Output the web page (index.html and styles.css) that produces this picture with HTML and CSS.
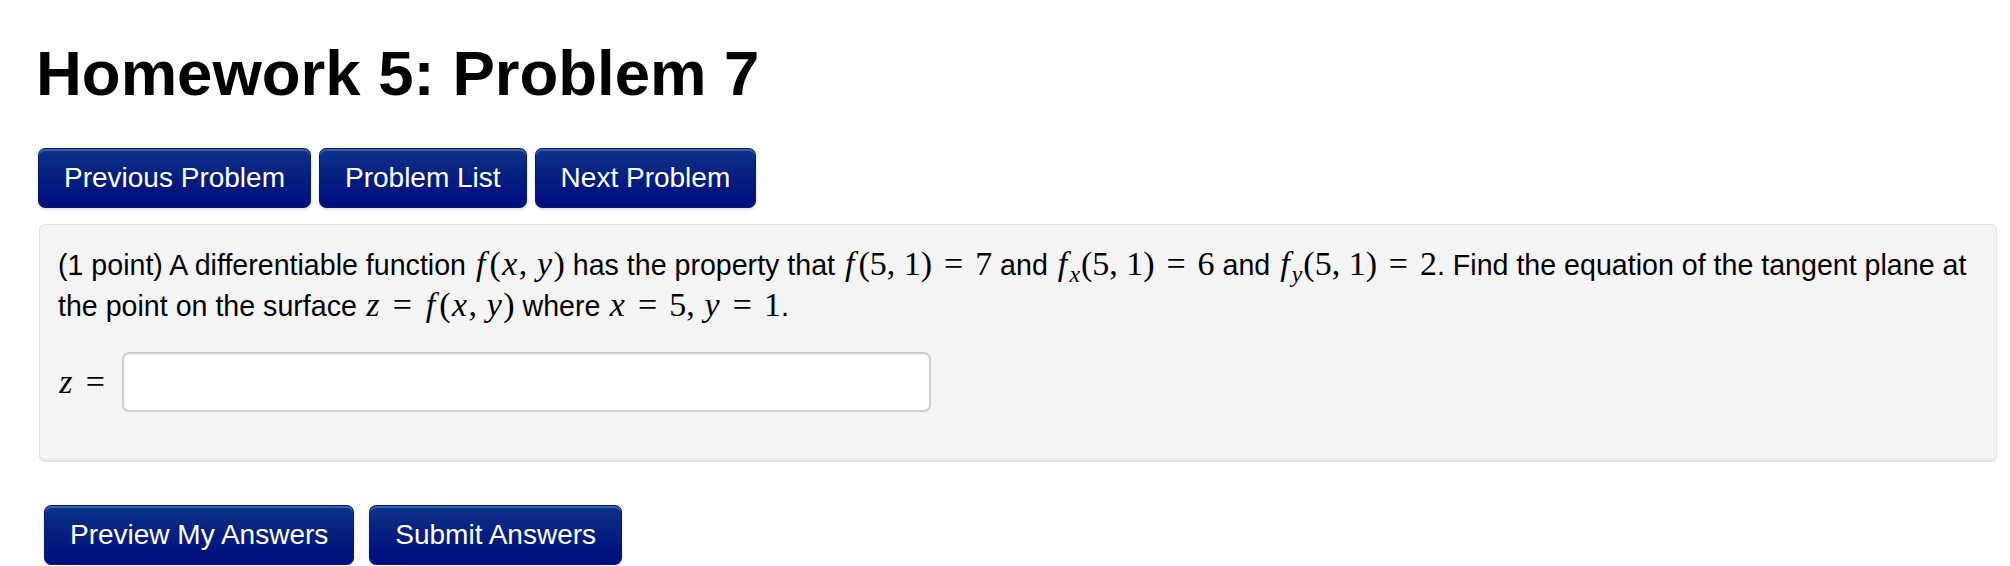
FILE: index.html
```html
<!DOCTYPE html>
<html lang="en">
<head>
<meta charset="utf-8">
<title>Homework 5: Problem 7</title>
<link rel="stylesheet" href="styles.css">
</head>
<body>
<div class="page">
  <h1 class="title">Homework 5: Problem 7</h1>
  <div class="nav">
    <button class="btn">Previous Problem</button>
    <button class="btn">Problem List</button>
    <button class="btn">Next Problem</button>
  </div>
  <div class="problem">
    <p class="statement">(1 point) A differentiable function <span class="m"><i class="mi f">f</i>(<i class="mi">x</i>,<span class="ts"></span><i class="mi">y</i>)</span> has the property that <span class="m"><i class="mi f">f</i>(5,<span class="ts"></span>1)<span class="eq">=</span>7</span> and <span class="m"><i class="mi f">f</i><sub class="sb"><i class="mi">x</i></sub>(5,<span class="ts"></span>1)<span class="eq">=</span>6</span> and <span class="m"><i class="mi f">f</i><sub class="sb"><i class="mi">y</i></sub>(5,<span class="ts"></span>1)<span class="eq">=</span>2</span>. Find the equation of the tangent plane at<br>the point on the surface <span class="m"><i class="mi">z</i><span class="eq">=</span><i class="mi f">f</i>(<i class="mi">x</i>,<span class="ts"></span><i class="mi">y</i>)</span> where <span class="m"><i class="mi">x</i><span class="eq">=</span>5,<span class="ts"></span><i class="mi">y</i><span class="eq">=</span>1</span>.</p>
    <div class="answer">
      <span class="m"><i class="mi">z</i><span class="eq">=</span></span>
      <input class="field" type="text" aria-label="answer">
    </div>
  </div>
  <div class="actions">
    <button class="btn">Preview My Answers</button>
    <button class="btn">Submit Answers</button>
  </div>
</div>
</body>
</html>
```

FILE: styles.css
```css
* { box-sizing: border-box; }

body {
  margin: 0;
  background: #fff;
  color: #000;
  font-family: "Liberation Sans", Arial, Helvetica, sans-serif;
  font-size: 28px;
  line-height: 40px;
}

.page {
  padding: 0 13px 0 38px;
}

.title {
  margin: 36px 0 0 -2px;
  font-size: 63.5px;
  line-height: 74px;
  font-weight: 700;
}

.nav {
  display: flex;
  gap: 8px;
  margin-top: 38px;
}

.btn {
  font-family: "Liberation Sans", Arial, Helvetica, sans-serif;
  font-size: 28px;
  line-height: 40px;
  color: #fff;
  padding: 9px 25px;
  border: 1px solid #021a6e;
  border-radius: 7px;
  background: linear-gradient(to bottom, #0c338c 0%, #05207f 45%, #000b80 100%);
  box-shadow: inset 0 2px 0 rgba(255, 255, 255, 0.22), 0 2px 3px rgba(0, 0, 0, 0.12);
  cursor: pointer;
}

.problem {
  margin: 16px 0 0 1px;
  background: #f4f4f4;
  border: 1px solid #e3e3e3;
  border-bottom-color: #dcdcdc;
  border-radius: 6px;
  box-shadow: inset 0 -2px 1px rgba(0, 0, 0, 0.05);
  padding: 19px 18px 49px 18px;
}

.statement {
  margin: 0;
  font-size: 28.6px;
}

.m {
  font-family: "Liberation Serif", "Times New Roman", serif;
  font-size: 34px;
  white-space: nowrap;
}

.mi {
  font-style: italic;
  padding: 0 0.04em;
}

.mi.f {
  padding: 0 0.12em 0 0.06em;
}

.ts {
  display: inline-block;
  width: 0.25em;
}

.eq {
  display: inline-block;
  margin: 0 0.35em;
}

.sb {
  font-size: 70%;
  vertical-align: -0.28em;
  line-height: 0;
  margin-left: -0.12em;
}

.answer {
  display: flex;
  align-items: center;
  margin-top: 26px;
}

.answer .m {
  width: 64px;
}

.field {
  width: 809px;
  height: 60px;
  background: #fff;
  border: 2px solid #cfcfcf;
  border-radius: 7px;
  box-shadow: inset 0 1px 2px rgba(0, 0, 0, 0.08);
  font-size: 28px;
  padding: 0 12px;
}

.actions {
  display: flex;
  gap: 15px;
  margin: 43px 0 0 6px;
}
```
